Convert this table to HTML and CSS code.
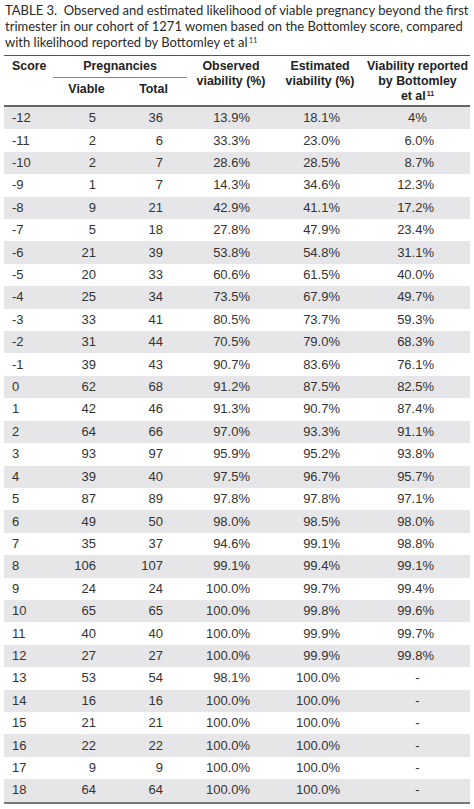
FILE: index.html
```html
<!DOCTYPE html>
<html>
<head>
<meta charset="utf-8">
<link rel="stylesheet" href="styles.css">
</head>
<body>
<div class="wrap">
<p class="caption"><span class="cl">TABLE 3.&nbsp; Observed and estimated likelihood of viable pregnancy beyond the first</span><span class="cl">trimester in our cohort of 1271 women based on the Bottomley score, compared</span><span class="cl">with likelihood reported by Bottomley et al<sup>11</sup></span></p>
<table class="data">
<colgroup>
<col class="c1"><col class="c2"><col class="c3"><col class="c4"><col class="c5"><col class="c6">
</colgroup>
<thead>
<tr class="h1">
<th rowspan="2" class="score">Score</th>
<th colspan="2" class="preg">Pregnancies</th>
<th rowspan="2">Observed<br>viability (%)</th>
<th rowspan="2">Estimated<br>viability (%)</th>
<th rowspan="2">Viability reported<br>by Bottomley<br>et al<sup>11</sup></th>
</tr>
<tr class="h2">
<th>Viable</th>
<th>Total</th>
</tr>
</thead>
<tbody>
<tr><td>-12</td><td>5</td><td>36</td><td>13.9%</td><td>18.1%</td><td class="ctr">4%</td></tr>
<tr><td>-11</td><td>2</td><td>6</td><td>33.3%</td><td>23.0%</td><td>6.0%</td></tr>
<tr><td>-10</td><td>2</td><td>7</td><td>28.6%</td><td>28.5%</td><td>8.7%</td></tr>
<tr><td>-9</td><td>1</td><td>7</td><td>14.3%</td><td>34.6%</td><td>12.3%</td></tr>
<tr><td>-8</td><td>9</td><td>21</td><td>42.9%</td><td>41.1%</td><td>17.2%</td></tr>
<tr><td>-7</td><td>5</td><td>18</td><td>27.8%</td><td>47.9%</td><td>23.4%</td></tr>
<tr><td>-6</td><td>21</td><td>39</td><td>53.8%</td><td>54.8%</td><td>31.1%</td></tr>
<tr><td>-5</td><td>20</td><td>33</td><td>60.6%</td><td>61.5%</td><td>40.0%</td></tr>
<tr><td>-4</td><td>25</td><td>34</td><td>73.5%</td><td>67.9%</td><td>49.7%</td></tr>
<tr><td>-3</td><td>33</td><td>41</td><td>80.5%</td><td>73.7%</td><td>59.3%</td></tr>
<tr><td>-2</td><td>31</td><td>44</td><td>70.5%</td><td>79.0%</td><td>68.3%</td></tr>
<tr><td>-1</td><td>39</td><td>43</td><td>90.7%</td><td>83.6%</td><td>76.1%</td></tr>
<tr><td>0</td><td>62</td><td>68</td><td>91.2%</td><td>87.5%</td><td>82.5%</td></tr>
<tr><td>1</td><td>42</td><td>46</td><td>91.3%</td><td>90.7%</td><td>87.4%</td></tr>
<tr><td>2</td><td>64</td><td>66</td><td>97.0%</td><td>93.3%</td><td>91.1%</td></tr>
<tr><td>3</td><td>93</td><td>97</td><td>95.9%</td><td>95.2%</td><td>93.8%</td></tr>
<tr><td>4</td><td>39</td><td>40</td><td>97.5%</td><td>96.7%</td><td>95.7%</td></tr>
<tr><td>5</td><td>87</td><td>89</td><td>97.8%</td><td>97.8%</td><td>97.1%</td></tr>
<tr><td>6</td><td>49</td><td>50</td><td>98.0%</td><td>98.5%</td><td>98.0%</td></tr>
<tr><td>7</td><td>35</td><td>37</td><td>94.6%</td><td>99.1%</td><td>98.8%</td></tr>
<tr><td>8</td><td>106</td><td>107</td><td>99.1%</td><td>99.4%</td><td>99.1%</td></tr>
<tr><td>9</td><td>24</td><td>24</td><td>100.0%</td><td>99.7%</td><td>99.4%</td></tr>
<tr><td>10</td><td>65</td><td>65</td><td>100.0%</td><td>99.8%</td><td>99.6%</td></tr>
<tr><td>11</td><td>40</td><td>40</td><td>100.0%</td><td>99.9%</td><td>99.7%</td></tr>
<tr><td>12</td><td>27</td><td>27</td><td>100.0%</td><td>99.9%</td><td>99.8%</td></tr>
<tr><td>13</td><td>53</td><td>54</td><td>98.1%</td><td>100.0%</td><td class="ctr">-</td></tr>
<tr><td>14</td><td>16</td><td>16</td><td>100.0%</td><td>100.0%</td><td class="ctr">-</td></tr>
<tr><td>15</td><td>21</td><td>21</td><td>100.0%</td><td>100.0%</td><td class="ctr">-</td></tr>
<tr><td>16</td><td>22</td><td>22</td><td>100.0%</td><td>100.0%</td><td class="ctr">-</td></tr>
<tr><td>17</td><td>9</td><td>9</td><td>100.0%</td><td>100.0%</td><td class="ctr">-</td></tr>
<tr><td>18</td><td>64</td><td>64</td><td>100.0%</td><td>100.0%</td><td class="ctr">-</td></tr>
</tbody>
</table>
</div>
</body>
</html>
```
FILE: styles.css
```css
html, body {
  margin: 0;
  padding: 0;
  background: #fff;
}
.wrap {
  padding: 2px 4px 0 4px;
}
.caption {
  margin: 0 0 5px 1px;
  font-family: Lato, "Open Sans", sans-serif;
  font-size: 13px;
  line-height: 16px;
  color: #2a2a2a;
  height: 48px;
}
.cl {
  display: block;
  white-space: nowrap;
}
.caption sup {
  font-size: 7px;
  line-height: 0;
  vertical-align: 4.5px;
  margin-left: 1.5px;
}
.data {
  width: 466px;
  border-collapse: collapse;
  table-layout: fixed;
  font-family: "Liberation Sans", Arial, sans-serif;
  color: #333;
  border-top: 1.5px solid #555;
  border-bottom: 2px solid #777;
}
.c1 { width: 49px; }
.c2 { width: 67px; }
.c3 { width: 67px; }
.c4 { width: 88px; }
.c5 { width: 90px; }
.c6 { width: 105px; }
.data th {
  font-size: 12.4px;
  font-weight: bold;
  color: #222;
  line-height: 15px;
  text-align: center;
  vertical-align: top;
  padding: 3px 0 0 0;
}
.data th sup {
  font-size: 7px;
  line-height: 0;
  vertical-align: 4px;
  margin-left: 1px;
}
.data th.score {
  text-align: left;
  padding-left: 8px;
}
.h1 th.preg {
  padding-bottom: 3px;
  border-bottom: 1px solid #888;
}
.h2 th {
  padding: 4px 0 8px 0;
}
.data thead {
  border-bottom: 2px solid #666;
}
.data td {
  font-size: 13px;
  height: 22.42px;
  line-height: 22px;
  padding: 0 0 0 0;
  text-align: right;
  vertical-align: middle;
}
.data td:nth-child(1) { text-align: left; padding-left: 8px; }
.data td:nth-child(2) { padding-right: 24px; }
.data td:nth-child(3) { padding-right: 24px; }
.data td:nth-child(4) { padding-right: 25px; }
.data td:nth-child(5) { padding-right: 25px; }
.data td:nth-child(6) { padding-right: 36px; }
.data td.ctr { text-align: center; padding-right: 0; }
.data tbody tr:nth-child(odd) td {
  background: #e6e6e8;
}
```
